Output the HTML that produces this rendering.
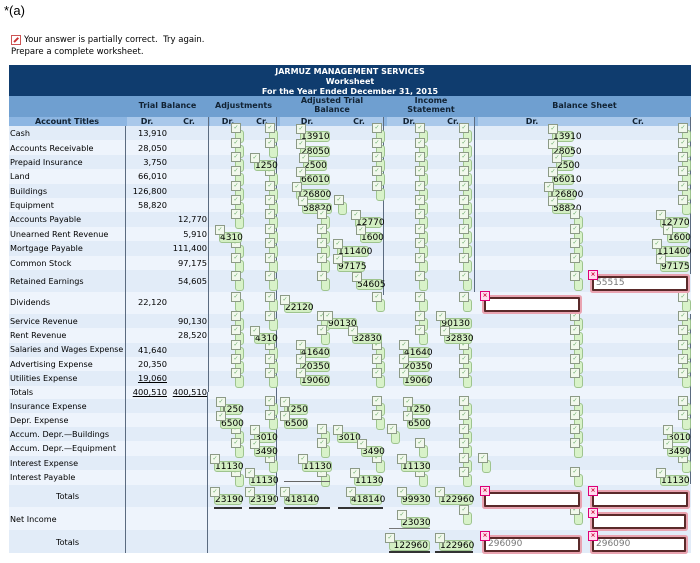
<!DOCTYPE html>
<html><head><meta charset="utf-8"><style>
*{margin:0;padding:0;box-sizing:border-box}
body{width:700px;height:563px;background:#fff;font-family:"DejaVu Sans","Liberation Sans",sans-serif;position:relative;overflow:hidden;color:#000}
.a{position:absolute}
.r{position:absolute;left:9px;width:682px}
.t{position:absolute;font-size:8.1px;white-space:nowrap}
.num{position:absolute;font-size:8.3px;text-align:right;white-space:nowrap}
.f{position:absolute;height:11px;background:#d3eec3;border:1px solid #9ec48e;border-radius:3px;font-size:9px;line-height:10px;text-align:right;padding-right:1px;font-family:"DejaVu Sans",sans-serif}
.f::before,.e::before,.x::before{content:"✓";color:#6a6;font-size:6px;line-height:7px;text-align:center;position:absolute;left:-5px;top:-8px;width:8px;height:8px;border:1px solid #8c9a86;background:#f1f8ec}
.e{position:absolute;width:9px;height:13px;background:#d8f2c9;border:1px solid #9ec48e;border-radius:3px}
.x{position:absolute;height:15px;background:#fff;border:2px solid #5a2a2a;box-shadow:0 0 0 2px #e9a3b0;border-radius:1px;font-size:9px;color:#777;line-height:11px;padding-left:2px}
.x::before{content:"×";color:#c03;font-weight:bold;border-color:#d07;background:#fde;left:-6px;top:-8px;width:8px;height:8px}
.v{position:absolute;width:1px;background:#5b6b80}
.h{position:absolute;height:2px;background:#333}
.hd{position:absolute;font-weight:bold;font-size:8px;color:#123;text-align:center}
</style></head><body>
<div class="a" style="left:4px;top:3px;font-size:13px;font-family:'Liberation Sans',sans-serif">*(a)</div>
<div class="a" style="left:11px;top:35px;width:10px;height:10px;border:1px solid #c55;background:#fff"></div>
<div class="a" style="left:13px;top:39px;width:6px;height:1.5px;background:#c33;transform:rotate(-45deg)"></div>
<div class="t" style="left:24px;top:35px;font-size:8.5px">Your answer is partially correct.&nbsp; Try again.</div>
<div class="t" style="left:11px;top:47px;font-size:8.5px">Prepare a complete worksheet.</div>

<div class="r" style="top:65px;height:31px;background:#0f3c6e"></div>
<div class="hd" style="left:9px;width:682px;top:67px;color:#fff">JARMUZ MANAGEMENT SERVICES</div>
<div class="hd" style="left:9px;width:682px;top:77px;color:#fff">Worksheet</div>
<div class="hd" style="left:9px;width:682px;top:87px;color:#fff">For the Year Ended December 31, 2015</div>
<div class="r" style="top:96px;height:21px;background:#6f9fd0"></div>
<div class="r" style="top:117px;height:9px;background:#8db6e2"></div>
<div class="a" style="left:127px;top:117px;width:81px;height:9px;background:#a9c8ea"></div>
<div class="a" style="left:210px;top:117px;width:67px;height:9px;background:#a9c8ea"></div>
<div class="a" style="left:280px;top:117px;width:104px;height:9px;background:#a9c8ea"></div>
<div class="a" style="left:387px;top:117px;width:88px;height:9px;background:#a9c8ea"></div>
<div class="a" style="left:478px;top:117px;width:213px;height:9px;background:#a9c8ea"></div>
<div class="hd" style="left:127px;width:81px;top:101px">Trial Balance</div>
<div class="hd" style="left:210px;width:67px;top:101px">Adjustments</div>
<div class="hd" style="left:280px;width:104px;top:96px;line-height:9px">Adjusted Trial<br>Balance</div>
<div class="hd" style="left:387px;width:88px;top:96px;line-height:9px">Income<br>Statement</div>
<div class="hd" style="left:478px;width:213px;top:101px">Balance Sheet</div>
<div class="hd" style="left:9px;width:116px;top:117px">Account Titles</div>
<div class="hd" style="left:127px;width:40px;top:117px">Dr.</div><div class="hd" style="left:170px;width:38px;top:117px">Cr.</div>
<div class="hd" style="left:212px;width:32px;top:117px">Dr.</div><div class="hd" style="left:248px;width:28px;top:117px">Cr.</div>
<div class="hd" style="left:282px;width:50px;top:117px">Dr.</div><div class="hd" style="left:334px;width:50px;top:117px">Cr.</div>
<div class="hd" style="left:388px;width:42px;top:117px">Dr.</div><div class="hd" style="left:432px;width:42px;top:117px">Cr.</div>
<div class="hd" style="left:480px;width:104px;top:117px">Dr.</div><div class="hd" style="left:586px;width:104px;top:117px">Cr.</div>

<div class="r" style="top:126px;height:14px;background:#e2ecf8"></div>
<div class="r" style="top:140px;height:15px;background:#eef4fc"></div>
<div class="r" style="top:155px;height:14px;background:#e2ecf8"></div>
<div class="r" style="top:169px;height:15px;background:#eef4fc"></div>
<div class="r" style="top:184px;height:14px;background:#e2ecf8"></div>
<div class="r" style="top:198px;height:14px;background:#eef4fc"></div>
<div class="r" style="top:212px;height:15px;background:#e2ecf8"></div>
<div class="r" style="top:227px;height:14px;background:#eef4fc"></div>
<div class="r" style="top:241px;height:15px;background:#e2ecf8"></div>
<div class="r" style="top:256px;height:14px;background:#eef4fc"></div>
<div class="r" style="top:270px;height:22px;background:#e2ecf8"></div>
<div class="r" style="top:292px;height:22px;background:#eef4fc"></div>
<div class="r" style="top:314px;height:14px;background:#e2ecf8"></div>
<div class="r" style="top:328px;height:15px;background:#eef4fc"></div>
<div class="r" style="top:343px;height:14px;background:#e2ecf8"></div>
<div class="r" style="top:357px;height:14px;background:#eef4fc"></div>
<div class="r" style="top:371px;height:15px;background:#e2ecf8"></div>
<div class="r" style="top:386px;height:13px;background:#eef4fc"></div>
<div class="r" style="top:399px;height:14px;background:#e2ecf8"></div>
<div class="r" style="top:413px;height:14px;background:#eef4fc"></div>
<div class="r" style="top:427px;height:14px;background:#e2ecf8"></div>
<div class="r" style="top:441px;height:15px;background:#eef4fc"></div>
<div class="r" style="top:456px;height:14px;background:#e2ecf8"></div>
<div class="r" style="top:470px;height:15px;background:#eef4fc"></div>
<div class="r" style="top:485px;height:22px;background:#e2ecf8"></div>
<div class="r" style="top:507px;height:23px;background:#eef4fc"></div>
<div class="r" style="top:530px;height:23px;background:#e2ecf8"></div>

<div class="v" style="left:125px;top:126px;height:427px"></div>
<div class="v" style="left:208px;top:117px;height:275px"></div>
<div class="v" style="left:207px;top:392px;height:161px"></div>
<div class="v" style="left:276px;top:117px;height:378px"></div>
<div class="v" style="left:383px;top:117px;height:178px"></div>
<div class="v" style="left:474px;top:117px;height:175px"></div>
<div class="v" style="left:690px;top:117px;height:157px"></div>
<div class="v" style="left:690px;top:314px;height:170px"></div>

<div class="t" style="left:10px;top:128px">Cash</div>
<div class="t" style="left:10px;top:143px">Accounts Receivable</div>
<div class="t" style="left:10px;top:157px">Prepaid Insurance</div>
<div class="t" style="left:10px;top:171px">Land</div>
<div class="t" style="left:10px;top:186px">Buildings</div>
<div class="t" style="left:10px;top:200px">Equipment</div>
<div class="t" style="left:10px;top:214px">Accounts Payable</div>
<div class="t" style="left:10px;top:229px">Unearned Rent Revenue</div>
<div class="t" style="left:10px;top:243px">Mortgage Payable</div>
<div class="t" style="left:10px;top:258px">Common Stock</div>
<div class="t" style="left:10px;top:276px">Retained Earnings</div>
<div class="t" style="left:10px;top:297px">Dividends</div>
<div class="t" style="left:10px;top:316px">Service Revenue</div>
<div class="t" style="left:10px;top:330px">Rent Revenue</div>
<div class="t" style="left:10px;top:345px;font-size:7.9px">Salaries and Wages Expense</div>
<div class="t" style="left:10px;top:359px">Advertising Expense</div>
<div class="t" style="left:10px;top:373px">Utilities Expense</div>
<div class="t" style="left:10px;top:387px">Totals</div>
<div class="t" style="left:10px;top:401px">Insurance Expense</div>
<div class="t" style="left:10px;top:415px">Depr. Expense</div>
<div class="t" style="left:10px;top:429px">Accum. Depr.—Buildings</div>
<div class="t" style="left:10px;top:443px">Accum. Depr.—Equipment</div>
<div class="t" style="left:10px;top:458px">Interest Expense</div>
<div class="t" style="left:10px;top:472px">Interest Payable</div>
<div class="t" style="left:56px;top:491px">Totals</div>
<div class="t" style="left:10px;top:514px">Net Income</div>
<div class="t" style="left:56px;top:537px">Totals</div>

<div class="num" style="right:533px;top:128px">13,910</div>
<div class="num" style="right:533px;top:143px">28,050</div>
<div class="num" style="right:533px;top:157px">3,750</div>
<div class="num" style="right:533px;top:171px">66,010</div>
<div class="num" style="right:533px;top:186px">126,800</div>
<div class="num" style="right:533px;top:200px">58,820</div>
<div class="num" style="right:493px;top:214px">12,770</div>
<div class="num" style="right:493px;top:229px">5,910</div>
<div class="num" style="right:493px;top:243px">111,400</div>
<div class="num" style="right:493px;top:258px">97,175</div>
<div class="num" style="right:493px;top:276px">54,605</div>
<div class="num" style="right:533px;top:297px">22,120</div>
<div class="num" style="right:493px;top:316px">90,130</div>
<div class="num" style="right:493px;top:330px">28,520</div>
<div class="num" style="right:533px;top:345px">41,640</div>
<div class="num" style="right:533px;top:359px">20,350</div>
<div class="num" style="right:533px;top:373px;text-decoration:underline">19,060</div>
<div class="num" style="right:533px;top:387px;text-decoration:underline">400,510</div>
<div class="num" style="right:493px;top:387px;text-decoration:underline">400,510</div>

<div class="e" style="left:235px;top:130px"></div><div class="e" style="left:235px;top:145px"></div><div class="e" style="left:235px;top:159px"></div><div class="e" style="left:235px;top:173px"></div><div class="e" style="left:235px;top:188px"></div><div class="e" style="left:235px;top:202px"></div><div class="e" style="left:235px;top:216px"></div><div class="e" style="left:235px;top:245px"></div><div class="e" style="left:235px;top:260px"></div><div class="e" style="left:235px;top:278px"></div><div class="e" style="left:235px;top:299px"></div><div class="e" style="left:235px;top:318px"></div><div class="e" style="left:235px;top:332px"></div><div class="e" style="left:235px;top:347px"></div><div class="e" style="left:235px;top:361px"></div><div class="e" style="left:235px;top:375px"></div><div class="e" style="left:235px;top:431px"></div><div class="e" style="left:235px;top:445px"></div><div class="e" style="left:235px;top:474px"></div>
<div class="f" style="left:219px;top:232px;width:23px">4310</div>
<div class="f" style="left:220px;top:404px;width:22px">1250</div>
<div class="f" style="left:220px;top:418px;width:22px">6500</div>
<div class="f" style="left:214px;top:461px;width:28px">11130</div>
<div class="f" style="left:214px;top:494px;width:28px">23190</div>
<div class="h" style="left:214px;top:507px;width:28px"></div>

<div class="e" style="left:269px;top:130px"></div><div class="e" style="left:269px;top:145px"></div><div class="e" style="left:269px;top:173px"></div><div class="e" style="left:269px;top:188px"></div><div class="e" style="left:269px;top:202px"></div><div class="e" style="left:269px;top:216px"></div><div class="e" style="left:269px;top:231px"></div><div class="e" style="left:269px;top:245px"></div><div class="e" style="left:269px;top:260px"></div><div class="e" style="left:269px;top:278px"></div><div class="e" style="left:269px;top:299px"></div><div class="e" style="left:269px;top:318px"></div><div class="e" style="left:269px;top:347px"></div><div class="e" style="left:269px;top:361px"></div><div class="e" style="left:269px;top:375px"></div><div class="e" style="left:269px;top:403px"></div><div class="e" style="left:269px;top:417px"></div><div class="e" style="left:269px;top:460px"></div>
<div class="f" style="left:254px;top:160px;width:22px">1250</div>
<div class="f" style="left:254px;top:333px;width:22px">4310</div>
<div class="f" style="left:254px;top:432px;width:22px">3010</div>
<div class="f" style="left:254px;top:446px;width:22px">3490</div>
<div class="f" style="left:249px;top:475px;width:27px">11130</div>
<div class="f" style="left:249px;top:494px;width:27px">23190</div>
<div class="h" style="left:249px;top:507px;width:27px"></div>

<div class="f" style="left:300px;top:131px;width:30px">13910</div>
<div class="f" style="left:300px;top:146px;width:30px">28050</div>
<div class="f" style="left:303px;top:160px;width:24px">2500</div>
<div class="f" style="left:300px;top:174px;width:30px">66010</div>
<div class="f" style="left:296px;top:189px;width:34px">126800</div>
<div class="f" style="left:302px;top:203px;width:30px">58820</div>
<div class="e" style="left:321px;top:216px"></div><div class="e" style="left:321px;top:231px"></div><div class="e" style="left:321px;top:245px"></div><div class="e" style="left:321px;top:260px"></div><div class="e" style="left:321px;top:278px"></div><div class="e" style="left:321px;top:318px"></div><div class="e" style="left:321px;top:332px"></div><div class="e" style="left:321px;top:431px"></div><div class="e" style="left:321px;top:445px"></div><div class="e" style="left:321px;top:474px"></div>
<div class="f" style="left:284px;top:302px;width:28px">22120</div>
<div class="f" style="left:300px;top:347px;width:30px">41640</div>
<div class="f" style="left:300px;top:361px;width:30px">20350</div>
<div class="f" style="left:300px;top:375px;width:30px">19060</div>
<div class="f" style="left:284px;top:404px;width:24px">1250</div>
<div class="f" style="left:284px;top:418px;width:24px">6500</div>
<div class="f" style="left:302px;top:461px;width:30px">11130</div>
<div class="f" style="left:284px;top:494px;width:34px">418140</div>
<div class="h" style="left:284px;top:507px;width:46px"></div>
<div class="h" style="left:284px;top:481px;width:46px;height:1px;background:#666"></div>

<div class="e" style="left:376px;top:130px"></div><div class="e" style="left:376px;top:145px"></div><div class="e" style="left:376px;top:159px"></div><div class="e" style="left:376px;top:173px"></div><div class="e" style="left:376px;top:188px"></div><div class="e" style="left:338px;top:202px"></div><div class="e" style="left:376px;top:299px"></div><div class="e" style="left:376px;top:347px"></div><div class="e" style="left:376px;top:361px"></div><div class="e" style="left:376px;top:375px"></div><div class="e" style="left:376px;top:403px"></div><div class="e" style="left:376px;top:417px"></div><div class="e" style="left:376px;top:460px"></div>
<div class="f" style="left:355px;top:217px;width:27px">12770</div>
<div class="f" style="left:360px;top:232px;width:22px">1600</div>
<div class="f" style="left:337px;top:246px;width:32px">111400</div>
<div class="f" style="left:337px;top:261px;width:28px">97175</div>
<div class="f" style="left:356px;top:279px;width:27px">54605</div>
<div class="f" style="left:327px;top:318px;width:30px">90130</div>
<div class="f" style="left:352px;top:333px;width:30px">32830</div>
<div class="f" style="left:337px;top:432px;width:22px">3010</div>
<div class="f" style="left:361px;top:446px;width:22px">3490</div>
<div class="f" style="left:354px;top:475px;width:28px">11130</div>
<div class="f" style="left:350px;top:494px;width:32px">418140</div>
<div class="h" style="left:338px;top:507px;width:45px"></div>

<div class="e" style="left:419px;top:130px"></div><div class="e" style="left:419px;top:145px"></div><div class="e" style="left:419px;top:159px"></div><div class="e" style="left:419px;top:173px"></div><div class="e" style="left:419px;top:188px"></div><div class="e" style="left:419px;top:202px"></div><div class="e" style="left:419px;top:216px"></div><div class="e" style="left:419px;top:231px"></div><div class="e" style="left:419px;top:245px"></div><div class="e" style="left:419px;top:260px"></div><div class="e" style="left:419px;top:278px"></div><div class="e" style="left:419px;top:299px"></div><div class="e" style="left:419px;top:318px"></div><div class="e" style="left:419px;top:332px"></div><div class="e" style="left:391px;top:431px"></div><div class="e" style="left:419px;top:445px"></div><div class="e" style="left:419px;top:474px"></div>
<div class="f" style="left:403px;top:347px;width:27px">41640</div>
<div class="f" style="left:403px;top:361px;width:27px">20350</div>
<div class="f" style="left:403px;top:375px;width:27px">19060</div>
<div class="f" style="left:407px;top:404px;width:23px">1250</div>
<div class="f" style="left:407px;top:418px;width:23px">6500</div>
<div class="f" style="left:401px;top:461px;width:29px">11130</div>
<div class="f" style="left:401px;top:494px;width:29px">99930</div>
<div class="f" style="left:401px;top:517px;width:29px">23030</div>
<div class="f" style="left:389px;top:540px;width:41px">122960</div>
<div class="h" style="left:389px;top:551px;width:41px"></div>
<div class="h" style="left:389px;top:528px;width:41px;height:1px;background:#777"></div>

<div class="e" style="left:463px;top:130px"></div><div class="e" style="left:463px;top:145px"></div><div class="e" style="left:463px;top:159px"></div><div class="e" style="left:463px;top:173px"></div><div class="e" style="left:463px;top:188px"></div><div class="e" style="left:463px;top:202px"></div><div class="e" style="left:463px;top:216px"></div><div class="e" style="left:463px;top:231px"></div><div class="e" style="left:463px;top:245px"></div><div class="e" style="left:463px;top:260px"></div><div class="e" style="left:463px;top:278px"></div><div class="e" style="left:463px;top:299px"></div><div class="e" style="left:463px;top:347px"></div><div class="e" style="left:463px;top:361px"></div><div class="e" style="left:463px;top:375px"></div><div class="e" style="left:463px;top:403px"></div><div class="e" style="left:463px;top:417px"></div><div class="e" style="left:463px;top:431px"></div><div class="e" style="left:463px;top:445px"></div><div class="e" style="left:463px;top:460px"></div><div class="e" style="left:463px;top:474px"></div><div class="e" style="left:463px;top:512px"></div>
<div class="f" style="left:440px;top:318px;width:32px">90130</div>
<div class="f" style="left:444px;top:333px;width:28px">32830</div>
<div class="f" style="left:439px;top:494px;width:34px">122960</div>
<div class="f" style="left:439px;top:540px;width:34px">122960</div>
<div class="h" style="left:435px;top:551px;width:38px"></div>

<div class="f" style="left:552px;top:131px;width:22px">13910</div>
<div class="f" style="left:552px;top:146px;width:22px">28050</div>
<div class="f" style="left:556px;top:160px;width:18px">2500</div>
<div class="f" style="left:552px;top:174px;width:22px">66010</div>
<div class="f" style="left:548px;top:189px;width:28px">126800</div>
<div class="f" style="left:552px;top:203px;width:22px">58820</div>
<div class="e" style="left:574px;top:216px"></div><div class="e" style="left:574px;top:231px"></div><div class="e" style="left:574px;top:245px"></div><div class="e" style="left:574px;top:260px"></div><div class="e" style="left:574px;top:278px"></div><div class="e" style="left:574px;top:318px"></div><div class="e" style="left:574px;top:332px"></div><div class="e" style="left:574px;top:347px"></div><div class="e" style="left:574px;top:361px"></div><div class="e" style="left:574px;top:375px"></div><div class="e" style="left:574px;top:403px"></div><div class="e" style="left:574px;top:417px"></div><div class="e" style="left:574px;top:431px"></div><div class="e" style="left:574px;top:445px"></div><div class="e" style="left:482px;top:460px"></div><div class="e" style="left:574px;top:474px"></div><div class="e" style="left:574px;top:512px"></div>
<div class="x" style="left:484px;top:297px;width:96px"></div>
<div class="x" style="left:484px;top:492px;width:96px"></div>
<div class="x" style="left:484px;top:537px;width:96px">296090</div>

<div class="e" style="left:682px;top:130px"></div><div class="e" style="left:682px;top:145px"></div><div class="e" style="left:682px;top:159px"></div><div class="e" style="left:682px;top:173px"></div><div class="e" style="left:682px;top:188px"></div><div class="e" style="left:682px;top:202px"></div><div class="e" style="left:682px;top:299px"></div><div class="e" style="left:682px;top:318px"></div><div class="e" style="left:682px;top:332px"></div><div class="e" style="left:682px;top:347px"></div><div class="e" style="left:682px;top:361px"></div><div class="e" style="left:682px;top:375px"></div><div class="e" style="left:682px;top:403px"></div><div class="e" style="left:682px;top:417px"></div><div class="e" style="left:682px;top:460px"></div>
<div class="f" style="left:660px;top:217px;width:29px">12770</div>
<div class="f" style="left:667px;top:232px;width:22px">1600</div>
<div class="f" style="left:656px;top:246px;width:33px">111400</div>
<div class="f" style="left:660px;top:261px;width:29px">97175</div>
<div class="f" style="left:667px;top:432px;width:22px">3010</div>
<div class="f" style="left:667px;top:446px;width:22px">3490</div>
<div class="f" style="left:660px;top:475px;width:29px">11130</div>
<div class="x" style="left:592px;top:276px;width:96px">55515</div>
<div class="x" style="left:592px;top:492px;width:96px"></div>
<div class="x" style="left:592px;top:514px;width:94px"></div>
<div class="x" style="left:592px;top:537px;width:94px">296090</div>
</body></html>
